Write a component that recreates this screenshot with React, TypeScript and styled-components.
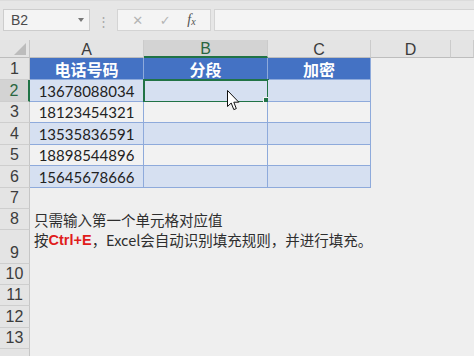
import React from "react";
import styled, { createGlobalStyle } from "styled-components";

const GlobalStyle = createGlobalStyle`
  html, body {
    margin: 0;
    padding: 0;
    background: #efefef;
    width: 474px;
    height: 356px;
    overflow: hidden;
  }
`;

const COLS = ["A", "B", "C", "D", ""];
const ROW_HEIGHTS = [22, 22, 21, 22, 21, 22, 21, 21, 34, 21, 21, 22, 21, 8];
const PHONES = ["13678088034", "18123454321", "13535836591", "18898544896", "15645678666"];

const App = () => {
  return (
    <Frame>
      <GlobalStyle />
      <FormulaBar>
        <NameBox>
          <span>B2</span>
          <DropArrow />
        </NameBox>
        <Grip>⋮</Grip>
        <ActionBox>
          <Action>✕</Action>
          <Action>✓</Action>
          <Fx>
            f<sub>x</sub>
          </Fx>
        </ActionBox>
        <FormulaInput />
      </FormulaBar>

      <Sheet $rows={ROW_HEIGHTS}>
        <Corner>
          <CornerTri />
        </Corner>
        {COLS.map((c) => (
          <ColHead key={c || "E"} $selected={c === "B"}>
            {c}
          </ColHead>
        ))}

        {ROW_HEIGHTS.map((_, i) => {
          const r = i + 1;
          return (
            <React.Fragment key={r}>
              <RowHead $selected={r === 2}>{r <= 13 ? r : ""}</RowHead>
              {r === 1 && (
                <>
                  <TableHead>电话号码</TableHead>
                  <TableHead>分段</TableHead>
                  <TableHead>加密</TableHead>
                  <Blank />
                  <Blank />
                </>
              )}
              {r >= 2 && r <= 6 && (
                <>
                  <TableCell $band={r % 2 === 0}>{PHONES[r - 2]}</TableCell>
                  <TableCell $band={r % 2 === 0} $active={r === 2}>
                    {r === 2 && <FillHandle />}
                  </TableCell>
                  <TableCell $band={r % 2 === 0} />
                  <Blank />
                  <Blank />
                </>
              )}
              {r === 8 && <Note $align="center">只需输入第一个单元格对应值</Note>}
              {r === 9 && (
                <Note $align="flex-start">
                  按<Key>Ctrl+E</Key>，Excel会自动识别填充规则，并进行填充。
                </Note>
              )}
              {(r === 7 || r >= 10) && (
                <>
                  <Blank />
                  <Blank />
                  <Blank />
                  <Blank />
                  <Blank />
                </>
              )}
            </React.Fragment>
          );
        })}
      </Sheet>

      <Pointer viewBox="0 0 13 21" width="13" height="21">
        <path
          d="M0.5 0.5 L0.5 16.5 L4.2 13 L6.8 19.6 L9.3 18.6 L6.8 12.2 L11.8 12.2 Z"
          fill="#fff"
          stroke="#111"
          strokeWidth="1"
          strokeLinejoin="round"
        />
      </Pointer>
    </Frame>
  );
};

export default App;

const Frame = styled.div`
  position: relative;
  width: 474px;
  height: 356px;
  overflow: hidden;
  background: #efefef;
  font-family: "Noto Sans CJK SC", sans-serif;
`;

const FormulaBar = styled.div`
  height: 40px;
  box-sizing: border-box;
  padding: 8px 0 9px 3px;
  display: flex;
  align-items: stretch;
  background: #e6e6e6;
  border-top: 1px solid #dcdcdc;
`;

const NameBox = styled.div`
  width: 87px;
  box-sizing: border-box;
  display: flex;
  align-items: center;
  justify-content: space-between;
  padding: 0 5px 0 7px;
  background: #f4f4f4;
  border: 1px solid #cdcdcd;
  font-family: "Liberation Sans", sans-serif;
  font-size: 14px;
  color: #4a4a4a;
`;

const DropArrow = styled.span`
  width: 0;
  height: 0;
  border-left: 3.5px solid transparent;
  border-right: 3.5px solid transparent;
  border-top: 4px solid #777;
`;

const Grip = styled.div`
  width: 27px;
  display: flex;
  align-items: center;
  justify-content: center;
  color: #a8a8a8;
  font-size: 13px;
`;

const ActionBox = styled.div`
  width: 94px;
  box-sizing: border-box;
  display: flex;
  align-items: center;
  justify-content: space-around;
  padding: 0 6px;
  background: #f4f4f4;
  border: 1px solid #d4d4d4;
`;

const Action = styled.span`
  color: #b4b4b4;
  font-family: "DejaVu Sans", sans-serif;
  font-size: 13px;
`;

const Fx = styled.span`
  font-family: "Liberation Serif", serif;
  font-style: italic;
  font-size: 14px;
  color: #505050;
  sub {
    font-size: 10px;
    vertical-align: -1px;
  }
`;

const FormulaInput = styled.div`
  flex: 1;
  margin-left: 3px;
  background: #f4f4f4;
  border: 1px solid #d4d4d4;
  border-right: none;
`;

const Sheet = styled.div<{ $rows: number[] }>`
  display: grid;
  grid-template-columns: 30px 114px 124px 103px 80px 1fr;
  grid-template-rows: 18px ${(p) => p.$rows.map((h) => `${h}px`).join(" ")};
`;

const Corner = styled.div`
  position: relative;
  background: #e4e4e4;
  border-right: 1px solid #c6c6c6;
  border-bottom: 1px solid #bdbdbd;
`;

const CornerTri = styled.span`
  position: absolute;
  right: 3px;
  bottom: 2px;
  width: 0;
  height: 0;
  border-left: 12px solid transparent;
  border-bottom: 12px solid #bcbcbc;
`;

const ColHead = styled.div<{ $selected?: boolean }>`
  display: flex;
  align-items: center;
  justify-content: center;
  box-sizing: border-box;
  background: ${(p) => (p.$selected ? "#d3d3d3" : "#e4e4e4")};
  border-right: 1px solid #cbcbcb;
  border-bottom: ${(p) => (p.$selected ? "2px solid #217346" : "1px solid #bdbdbd")};
  color: ${(p) => (p.$selected ? "#2a6641" : "#3c3c3c")};
  font-family: "Liberation Sans", sans-serif;
  font-size: 16px;
  padding-top: 2px;
`;

const RowHead = styled.div<{ $selected?: boolean }>`
  display: flex;
  align-items: flex-end;
  justify-content: center;
  box-sizing: border-box;
  padding-bottom: 1px;
  overflow: hidden;
  background: ${(p) => (p.$selected ? "#d3d3d3" : "#e4e4e4")};
  border-right: ${(p) => (p.$selected ? "2px solid #217346" : "1px solid #c6c6c6")};
  border-bottom: 1px solid #cecece;
  color: ${(p) => (p.$selected ? "#2a6641" : "#3c3c3c")};
  font-family: "Liberation Sans", sans-serif;
  font-size: 16px;
  line-height: 19px;
`;

const TableHead = styled.div`
  display: flex;
  align-items: center;
  justify-content: center;
  box-sizing: border-box;
  background: #4472c4;
  border-right: 1px solid #8eaadb;
  border-bottom: 1px solid #8eaadb;
  color: #fff;
  font-family: "Noto Sans CJK SC", sans-serif;
  font-weight: 700;
  font-size: 16px;
`;

const TableCell = styled.div<{ $band?: boolean; $active?: boolean }>`
  position: relative;
  display: flex;
  align-items: center;
  justify-content: center;
  box-sizing: border-box;
  background: ${(p) => (p.$band ? "#d6e0f1" : "#f2f2f2")};
  border-right: 1px solid #8eaadb;
  border-bottom: 1px solid #8eaadb;
  color: #222;
  font-family: "Lato", sans-serif;
  font-size: 15px;
  outline: ${(p) => (p.$active ? "2px solid #217346" : "none")};
  outline-offset: -1px;
`;

const FillHandle = styled.span`
  position: absolute;
  right: -4px;
  bottom: -4px;
  width: 6px;
  height: 6px;
  background: #217346;
  border: 1px solid #f2f2f2;
`;

const Blank = styled.div`
  background: #efefef;
`;

const Note = styled.div<{ $align: string }>`
  grid-column: 2 / -1;
  display: flex;
  align-items: ${(p) => p.$align};
  padding-left: 4px;
  font-family: "Noto Sans CJK SC", sans-serif;
  font-size: 14.5px;
  line-height: 20px;
  color: #2e2e2e;
  white-space: nowrap;
`;

const Key = styled.span`
  color: #e01c1c;
  font-family: "Liberation Sans", sans-serif;
  font-weight: 700;
`;

const Pointer = styled.svg`
  position: absolute;
  left: 227px;
  top: 90px;
`;
